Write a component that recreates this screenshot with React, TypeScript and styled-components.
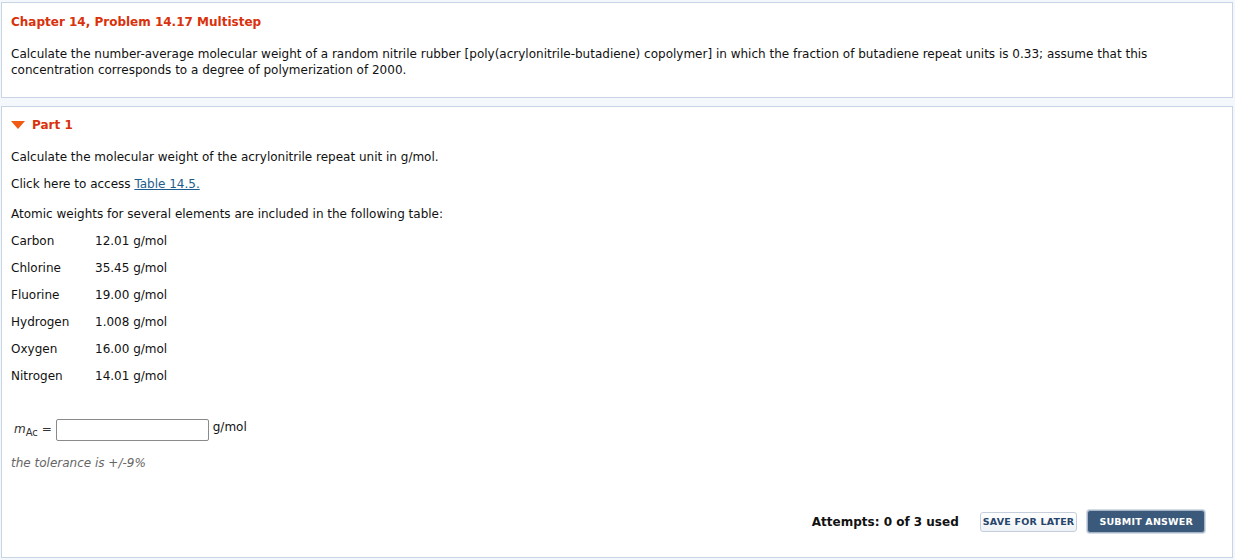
import React from "react";
import styled, { createGlobalStyle } from "styled-components";

const GlobalStyle = createGlobalStyle`
  html, body {
    margin: 0;
    padding: 0;
    background: #f4f7fb;
    font-family: "DejaVu Sans", Verdana, sans-serif;
    font-size: 12px;
    color: #111;
  }
`;

const Page = styled.div`
  padding: 2px 2px 2px 1px;
  display: flex;
  flex-direction: column;
  gap: 8px;
`;

const Panel = styled.section<{ height: number }>`
  background: #fff;
  border: 1px solid #c7d4e3;
  height: ${({ height }) => height}px;
  box-sizing: border-box;
  padding: 0 9px;
  display: flex;
  flex-direction: column;
`;

const Title = styled.h1`
  margin: 11px 0 0;
  font-size: 12px;
  font-weight: bold;
  color: #d9310b;
  line-height: 16px;
`;

const Text = styled.p<{ top: number }>`
  margin: ${({ top }) => top}px 0 0;
  line-height: 16px;
`;

const PartHeader = styled.div`
  display: flex;
  align-items: center;
  gap: 7px;
  margin-top: 10px;
  color: #d9310b;
  font-weight: bold;
  line-height: 16px;
`;

const Arrow = styled.span`
  width: 0;
  height: 0;
  border-left: 7px solid transparent;
  border-right: 7px solid transparent;
  border-top: 8px solid #f05a12;
`;

const Link = styled.a`
  color: #1d5c8c;
  text-decoration: underline;
`;

const ElementTable = styled.div`
  display: grid;
  grid-template-columns: 84px auto;
  row-gap: 11px;
  margin-top: 11px;
  line-height: 16px;
`;

const AnswerRow = styled.div`
  display: flex;
  align-items: center;
  margin-top: 35px;
  padding-left: 3px;
`;

const Symbol = styled.span`
  font-style: italic;
  color: #333;
  margin-right: 4px;
  sub {
    font-style: normal;
    font-size: 10px;
    vertical-align: -3px;
  }
`;

const AnswerInput = styled.input`
  width: 153px;
  height: 22px;
  box-sizing: border-box;
  border: 1px solid #8a8a8a;
  border-radius: 2px;
  margin: 0 4px 0 0;
  padding: 0 3px;
  font-family: inherit;
`;

const Unit = styled.span`
  align-self: flex-start;
  margin-top: 1px;
`;

const Tolerance = styled.p`
  margin: 14px 0 0;
  font-style: italic;
  color: #666;
  line-height: 16px;
`;

const Footer = styled.div`
  margin-top: auto;
  margin-bottom: 24px;
  display: flex;
  align-items: center;
  justify-content: flex-end;
  padding-right: 18px;
`;

const Attempts = styled.span`
  font-weight: bold;
  font-size: 12px;
  margin-right: 21px;
`;

const Button = styled.button<{ primary?: boolean }>`
  font-family: inherit;
  font-weight: bold;
  font-size: 9.5px;
  letter-spacing: 0.2px;
  border-radius: 3px;
  cursor: pointer;
  height: ${({ primary }) => (primary ? 23 : 20)}px;
  margin-left: ${({ primary }) => (primary ? 10 : 0)}px;
  color: ${({ primary }) => (primary ? "#fff" : "#27456b")};
  background: ${({ primary }) =>
    primary ? "#3b5a7b" : "linear-gradient(#fff, #eef2f6)"};
  border: 1px solid ${({ primary }) => (primary ? "#a5b5c6" : "#c4cfdb")};
  box-shadow: ${({ primary }) => (primary ? "0 0 0 1px #d3dbe4" : "none")};
  padding: ${({ primary }) => (primary ? "0 11px" : "0 2px")};
`;

const elements = [
  ["Carbon", "12.01 g/mol"],
  ["Chlorine", "35.45 g/mol"],
  ["Fluorine", "19.00 g/mol"],
  ["Hydrogen", "1.008 g/mol"],
  ["Oxygen", "16.00 g/mol"],
  ["Nitrogen", "14.01 g/mol"],
];

export default function App() {
  return (
    <>
      <GlobalStyle />
      <Page>
        <Panel height={96}>
          <Title>Chapter 14, Problem 14.17 Multistep</Title>
          <Text top={16}>
            Calculate the number-average molecular weight of a random nitrile rubber
            [poly(acrylonitrile-butadiene) copolymer] in which the fraction of butadiene
            repeat units is 0.33; assume that this concentration corresponds to a degree of
            polymerization of 2000.
          </Text>
        </Panel>
        <Panel height={452}>
          <PartHeader>
            <Arrow />
            Part 1
          </PartHeader>
          <Text top={16}>
            Calculate the molecular weight of the acrylonitrile repeat unit in g/mol.
          </Text>
          <Text top={11}>
            Click here to access <Link href="#">Table 14.5.</Link>
          </Text>
          <Text top={14}>
            Atomic weights for several elements are included in the following table:
          </Text>
          <ElementTable>
            {elements.map(([name, weight]) => (
              <React.Fragment key={name}>
                <span>{name}</span>
                <span>{weight}</span>
              </React.Fragment>
            ))}
          </ElementTable>
          <AnswerRow>
            <Symbol>
              m<sub>Ac</sub> =
            </Symbol>
            <AnswerInput type="text" />
            <Unit>g/mol</Unit>
          </AnswerRow>
          <Tolerance>the tolerance is +/-9%</Tolerance>
          <Footer>
            <Attempts>Attempts: 0 of 3 used</Attempts>
            <Button>SAVE FOR LATER</Button>
            <Button primary>SUBMIT ANSWER</Button>
          </Footer>
        </Panel>
      </Page>
    </>
  );
}
